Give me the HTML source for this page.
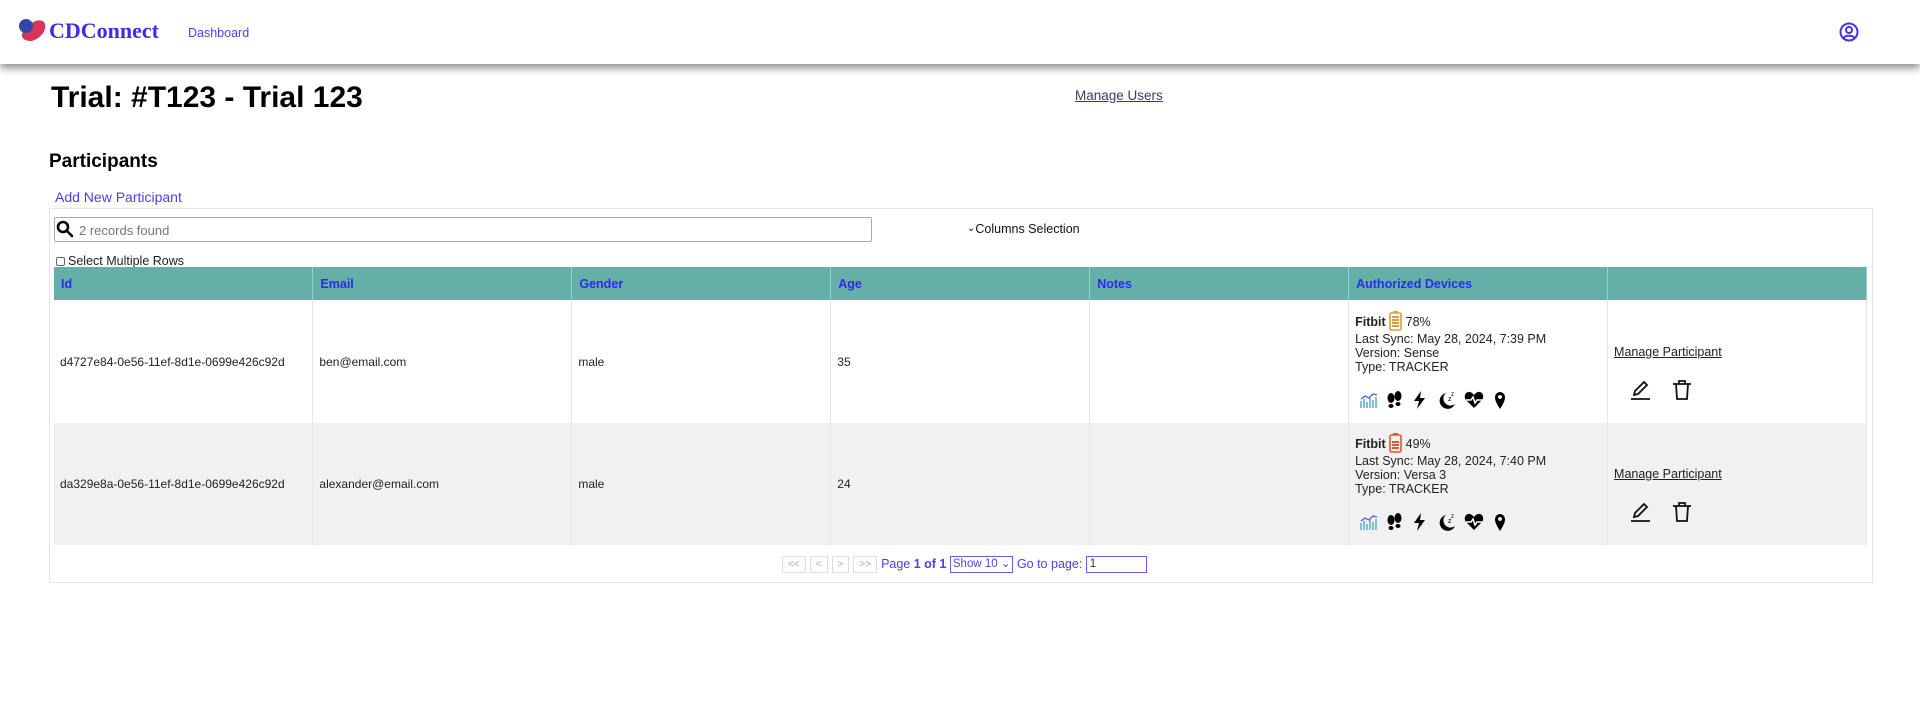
<!DOCTYPE html>
<html><head><meta charset="utf-8"><style>
*{box-sizing:border-box}
body{margin:0;width:1920px;height:721px;background:#fff;font-family:"Liberation Sans",Arial,sans-serif;position:relative;overflow:hidden;color:#222}
.hdr{position:absolute;left:0;top:0;width:1920px;height:64px;background:#fff;box-shadow:0 4px 8px rgba(0,0,0,.45)}
.abs{position:absolute;white-space:nowrap}
.brand{left:49px;top:18px;font-family:"Liberation Serif",serif;font-weight:bold;font-size:22px;color:#3b2de8}
.nav{left:188px;top:26px;font-size:12.5px;color:#4f3ff0}
h1{position:absolute;left:51px;top:81px;margin:0;font-size:30px;font-weight:bold;color:#000}
.mu{left:1075px;top:88px;font-size:13.5px;color:#3c3a6a;text-decoration:underline}
h2{position:absolute;left:49px;top:151px;margin:0;font-size:19px;font-weight:bold;color:#000}
.add{left:55px;top:189px;font-size:14px;color:#4a3ff0}
.box{position:absolute;left:49px;top:208px;width:1824px;height:375px;border:1px solid #e4e4e4}
.search{position:absolute;left:54px;top:217px;width:818px;height:25px;border:1px solid #aaa;border-radius:2px;font-size:13px;color:#777;padding:5px 0 0 24px}
.cols{left:967px;top:222px;font-size:12.5px;color:#111}
.sel{left:56px;top:254px;font-size:12.5px;color:#222}
.sel i{display:inline-block;width:9px;height:9px;border:1px solid #666;border-radius:2px;margin-right:3px;vertical-align:-1px}
table{position:absolute;left:54px;top:267px;width:1813px;border-collapse:collapse;table-layout:fixed}
th{background:#64afa7;color:#2b2bf0;font-size:12.5px;text-align:left;height:33px;padding:0 7px;border-right:1px solid #9cd0ca}
td{font-size:12px;height:123px;padding:0 6px;border-right:1px solid #e6e6e6;vertical-align:middle;color:#222}
tr.g td{background:#f1f1f1;height:122px}
.dev{line-height:14px;font-size:12.5px;position:relative}
.mp{text-decoration:underline;font-size:12.5px}
.pg{left:782px;top:556px;font-size:12.5px;color:#4b3ff0}
.pb{display:inline-block;border:1px solid #ddd;color:#aaa;font-size:10px;height:17px;line-height:15px;padding:0 5px;margin-right:4px;vertical-align:middle}
.sh{display:inline-block;border:1px solid #6b5ff0;height:17px;line-height:15px;padding:0 2px;font-size:11.5px;vertical-align:middle}
.gi{display:inline-block;border:1px solid #6b5ff0;width:61px;height:17px;line-height:15px;padding:0 3px;font-size:11.5px;vertical-align:middle;color:#333}
</style></head><body>
<div class="hdr"></div>
<svg class="abs" style="left:17px;top:18px" width="30" height="24" viewBox="0 0 30 24"><path d="M12 8 C16 2 26 0 28 6 C30 13 22 22 14 23 C6 23 3 18 6 14 C9 11 10 11 12 8Z" fill="#d8335a"/><circle cx="9" cy="8" r="7" fill="#3148a8"/></svg>
<div class="abs brand">CDConnect</div>
<div class="abs nav">Dashboard</div>
<svg class="abs" style="left:1839px;top:22px" width="20" height="20" viewBox="0 0 20 20" fill="none" stroke="#4a2ff0" stroke-width="2"><circle cx="10" cy="10" r="8.5"/><circle cx="10" cy="8" r="3"/><path d="M4.5 16 C6 13 14 13 15.5 16"/></svg>
<h1>Trial: #T123 - Trial 123</h1>
<div class="abs mu">Manage Users</div>
<h2>Participants</h2>
<div class="abs add">Add New Participant</div>
<div class="box"></div>
<div class="search">2 records found</div>
<svg class="abs" style="left:56px;top:220px" width="18" height="18" viewBox="0 0 18 18" fill="none" stroke="#000" stroke-width="2.6"><circle cx="7" cy="7" r="5"/><path d="M10.5 10.5 L16 16" stroke-linecap="round"/></svg>
<div class="abs cols"><span style="font-size:10px;vertical-align:2px">&#8964;</span>Columns Selection</div>
<div class="abs sel"><i></i>Select Multiple Rows</div>
<table>
<tr><th>Id</th><th>Email</th><th>Gender</th><th>Age</th><th>Notes</th><th>Authorized Devices</th><th></th></tr>
<tr><td>d4727e84-0e56-11ef-8d1e-0699e426c92d</td><td>ben@email.com</td><td>male</td><td>35</td><td></td>
<td class="dev"><div style="margin-top:0px"><b>Fitbit</b> <svg width="13" height="20" viewBox="0 0 13 20" style="vertical-align:-5px"><rect x="1" y="2" width="11" height="17" rx="1.5" fill="none" stroke="#d8a040" stroke-width="1.6"/><rect x="4" y="0" width="5" height="2" fill="#d8a040"/><path d="M3 6h7M3 9h7M3 12h7M3 15h7" stroke="#d8a040" stroke-width="2"/></svg> 78%</div><div style="margin-top:1px">Last Sync: May 28, 2024, 7:39 PM<br>Version: Sense<br>Type: TRACKER</div>
<div style="margin-top:16px;margin-left:5px">ICONS</div></td>
<td><div class="mp" style="margin-top:22px">Manage Participant</div>EDIT</td></tr>
<tr class="g"><td>da329e8a-0e56-11ef-8d1e-0699e426c92d</td><td>alexander@email.com</td><td>male</td><td>24</td><td></td>
<td class="dev"><div style="margin-top:0px"><b>Fitbit</b> <svg width="13" height="20" viewBox="0 0 13 20" style="vertical-align:-5px"><rect x="1" y="2" width="11" height="17" rx="1.5" fill="none" stroke="#e0563a" stroke-width="1.6"/><rect x="4" y="0" width="5" height="2" fill="#e0563a"/><path d="M3 9h7M3 12h7M3 15h7" stroke="#e0563a" stroke-width="2"/></svg> 49%</div><div style="margin-top:1px">Last Sync: May 28, 2024, 7:40 PM<br>Version: Versa 3<br>Type: TRACKER</div>
<div style="margin-top:16px;margin-left:5px">ICONS</div></td>
<td><div class="mp" style="margin-top:22px">Manage Participant</div>EDIT</td></tr>
</table>
<div class="abs pg"><span class="pb">&lt;&lt;</span><span class="pb">&lt;</span><span class="pb">&gt;</span><span class="pb">&gt;&gt;</span>Page <b>1 of 1</b> <span class="sh">Show 10 &#8964;</span> Go to page: <span class="gi">1</span></div>
<script>
var icons='<svg width="170" height="20" viewBox="0 0 170 20"><g><path d="M1 18V11M4 18V9M7 18V12M10 18V8M13 18V10M16 18V7" stroke="#7fbfe0" stroke-width="2"/><path d="M1 9 L5 6 L9 8 L13 4 L17 5" stroke="#5060d0" stroke-width="1.3" fill="none"/></g><g transform="translate(26,0)" fill="#000"><ellipse cx="5" cy="8" rx="3.5" ry="5"/><ellipse cx="5" cy="16" rx="2.5" ry="2"/><ellipse cx="12" cy="6" rx="3.5" ry="5"/><ellipse cx="12" cy="14" rx="2.5" ry="2"/></g><path transform="translate(52,0)" d="M9 1 L2 11 H7 L5 19 L13 8 H8 Z" fill="#000"/><g transform="translate(78,0)"><path d="M8 3 A8 8 0 1 0 17 14 A7 7 0 0 1 8 3Z" fill="#000"/><text x="10" y="11" font-size="7" font-family="Liberation Sans" fill="#000">z</text><text x="13" y="6" font-size="6" font-family="Liberation Sans" fill="#000">z</text></g><g transform="translate(104,0)"><path d="M10 18 L2 10 C-1 6 2 1 6 2 C8 2.5 9 4 10 5 C11 4 12 2.5 14 2 C18 1 21 6 18 10Z" fill="#000"/><path d="M2 10 H7 L9 7 L11 13 L13 10 H18" stroke="#fff" stroke-width="1.5" fill="none"/></g><path transform="translate(134,0)" d="M6 19 C3 14 1 11 1 7 A5 5 0 0 1 11 7 C11 11 9 14 6 19Z M6 5 A2 2 0 1 0 6.01 5Z" fill="#000" fill-rule="evenodd"/></svg>';
var edit='<div style="margin-top:20px;margin-left:16px;height:22px"><svg width="22" height="22" viewBox="0 0 22 22" fill="none" stroke="#111" stroke-width="1.8"><path d="M4 16 L5 12 L14 3 L17 6 L8 15 Z"/><path d="M1 20 H20"/></svg><svg style="margin-left:20px" width="20" height="22" viewBox="0 0 20 22" fill="none" stroke="#111" stroke-width="1.8"><path d="M1 5 H19 M7 5 V2 H13 V5 M4 5 L5 20 H15 L16 5"/></svg></div>';
document.querySelectorAll('td').forEach(function(t){t.innerHTML=t.innerHTML.replace('ICONS',icons).replace('EDIT',edit);});
</script>
</body></html>
